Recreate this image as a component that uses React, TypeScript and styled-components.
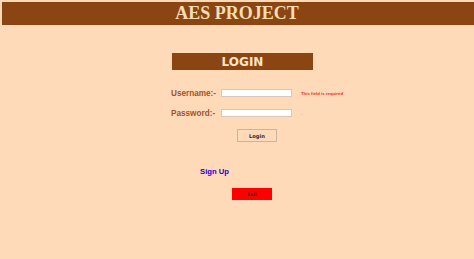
import * as React from 'react';
import styled, { createGlobalStyle } from 'styled-components';

const BROWN = '#8b4513';
const PEACH = '#ffdab9';

const GlobalStyle = createGlobalStyle`
  html, body {
    margin: 0;
    padding: 0;
    background: ${PEACH};
  }
  body {
    font-family: 'DejaVu Sans', Verdana, sans-serif;
  }
`;

const Page = styled.div`
  width: 474px;
  height: 259px;
  padding-top: 2px;
  box-sizing: border-box;
`;

const Header = styled.header`
  margin: 0 0 0 2px;
  height: 23px;
  background: ${BROWN};
  display: flex;
  align-items: center;
  justify-content: center;
  padding-right: 2px;
  color: #f5deb3;
  font-family: 'Liberation Serif', 'Times New Roman', serif;
  font-weight: bold;
  font-size: 18px;
`;

const Title = styled.div`
  margin: 28px 0 0 172px;
  width: 141px;
  height: 17px;
  background: ${BROWN};
  color: #ffe4c4;
  font-weight: bold;
  font-size: 12px;
  display: flex;
  align-items: center;
  justify-content: center;
`;

const Form = styled.form`
  margin: 18px 0 0 171px;
  display: grid;
  grid-template-columns: 50px 80px auto;
  grid-auto-rows: 9px;
  row-gap: 11px;
  align-items: center;
`;

const Label = styled.label`
  color: #a0522d;
  font-family: 'Liberation Sans', Arial, sans-serif;
  font-weight: bold;
  font-size: 8.2px;
  line-height: 9px;
  margin-top: 2px;
`;

const Field = styled.input`
  width: 71px;
  height: 8px;
  box-sizing: border-box;
  border: 1px solid #d8c8bc;
  background: #fff;
  padding: 0;
  margin: 0;
  outline: none;
`;

const Note = styled.span<{ $tiny?: boolean }>`
  color: #ec2a22;
  font-family: 'Liberation Sans', Arial, sans-serif;
  font-size: 4.3px;
  font-weight: ${(p) => (p.$tiny ? 'normal' : 'bold')};
  margin-top: 1px;
`;

const SubmitRow = styled.div`
  margin: 12px 0 0 237px;
`;

const Button = styled.button<{ $danger?: boolean }>`
  width: 40px;
  height: ${(p) => (p.$danger ? '12px' : '13px')};
  box-sizing: border-box;
  padding: 0;
  border: ${(p) => (p.$danger ? 'none' : '1px solid #c9b4a4')};
  background: ${(p) => (p.$danger ? '#ff0000' : PEACH)};
  color: #3a2a20;
  font-family: 'DejaVu Sans', Verdana, sans-serif;
  font-weight: bold;
  font-size: ${(p) => (p.$danger ? '4.5px' : '5.2px')};
  display: flex;
  align-items: center;
  justify-content: center;
`;

const SignUp = styled.a`
  display: block;
  margin: 25px 0 0 200px;
  width: max-content;
  color: #1e00d4;
  font-family: 'Liberation Sans', Arial, sans-serif;
  font-weight: bold;
  font-size: 7.7px;
  line-height: 10px;
  text-decoration: none;
`;

const ExitRow = styled.div`
  margin: 11px 0 0 232px;
`;

export default function App() {
  return (
    <Page>
      <GlobalStyle />
      <Header>AES PROJECT</Header>
      <Title>LOGIN</Title>
      <Form onSubmit={(e) => e.preventDefault()}>
        <Label htmlFor="username">Username:-</Label>
        <Field id="username" type="text" />
        <Note>This field is required</Note>
        <Label htmlFor="password">Password:-</Label>
        <Field id="password" type="password" />
        <Note $tiny>-</Note>
      </Form>
      <SubmitRow>
        <Button type="button">Login</Button>
      </SubmitRow>
      <SignUp href="#">Sign Up</SignUp>
      <ExitRow>
        <Button type="button" $danger>
          Exit
        </Button>
      </ExitRow>
    </Page>
  );
}
